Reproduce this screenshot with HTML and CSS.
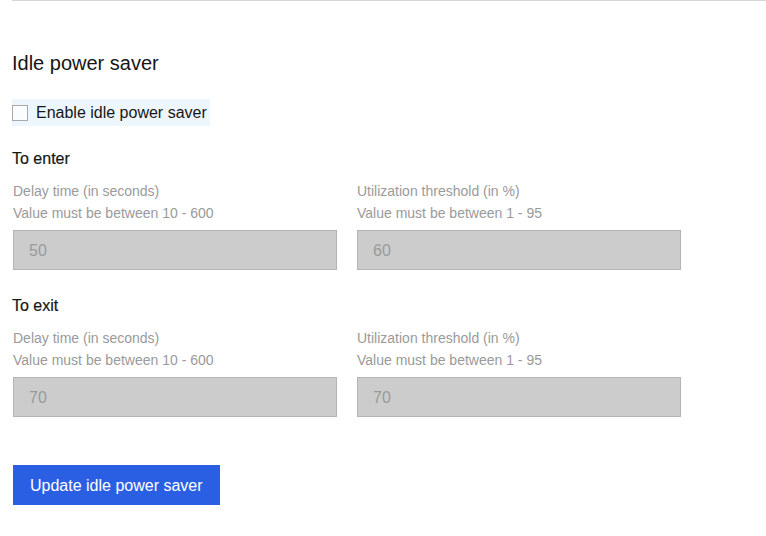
FILE: index.html
```html
<!DOCTYPE html>
<html lang="en">
<head>
  <meta charset="UTF-8">
  <meta name="viewport" content="width=device-width, initial-scale=1">
  <title>Idle power saver</title>
  <link rel="stylesheet" href="styles.css">
</head>
<body>
  <div class="page">
    <div class="rule"></div>

    <h2 class="title">Idle power saver</h2>

    <label class="toggle">
      <input type="checkbox" class="toggle-input">
      <span class="toggle-box"></span>
      <span class="toggle-text">Enable idle power saver</span>
    </label>

    <!-- Eintritt -->
    <h3 class="section-title">To enter</h3>
    <div class="fields">
      <div class="field">
        <span class="field-label">Delay time (in seconds)</span>
        <span class="field-hint">Value must be between 10 - 600</span>
        <input class="field-input" type="text" value="50" disabled>
      </div>
      <div class="field">
        <span class="field-label">Utilization threshold (in %)</span>
        <span class="field-hint">Value must be between 1 - 95</span>
        <input class="field-input" type="text" value="60" disabled>
      </div>
    </div>

    <!-- Austritt -->
    <h3 class="section-title exit">To exit</h3>
    <div class="fields">
      <div class="field">
        <span class="field-label">Delay time (in seconds)</span>
        <span class="field-hint">Value must be between 10 - 600</span>
        <input class="field-input" type="text" value="70" disabled>
      </div>
      <div class="field">
        <span class="field-label">Utilization threshold (in %)</span>
        <span class="field-hint">Value must be between 1 - 95</span>
        <input class="field-input" type="text" value="70" disabled>
      </div>
    </div>

    <button class="submit">Update idle power saver</button>
  </div>
</body>
</html>
```

FILE: styles.css
```css
:root {
  --text: #161616;
  --muted: #9a9a9a;
  --field-bg: #cccccc;
  --field-border: #b4b4b4;
  --accent: #2b5fe3;
  --highlight: #eef6fd;
}

* {
  margin: 0;
  padding: 0;
  box-sizing: border-box;
}

body {
  font-family: 'Liberation Sans', Arial, sans-serif;
  color: var(--text);
  background: #fff;
}

.page {
  padding-left: 12px;
}

.rule {
  border-top: 1px solid #d6d6d6;
}

.title {
  font-size: 20px;
  font-weight: 400;
  line-height: 24px;
  margin-top: 50px;
}

.toggle {
  display: inline-flex;
  align-items: center;
  gap: 8px;
  height: 27px;
  padding-right: 3px;
  margin-top: 24px;
  background-color: var(--highlight);
  cursor: pointer;
}

.toggle-input {
  display: none;
}

.toggle-box {
  width: 16px;
  height: 16px;
  border: 1px solid #a9a9a9;
  background: #fafcfe;
}

.toggle-text {
  font-size: 16px;
}

.section-title {
  font-size: 16px;
  font-weight: 400;
  line-height: 20px;
  margin-top: 23px;
  -webkit-text-stroke: 0.2px currentColor;
}

.section-title.exit {
  margin-top: 26px;
}

.fields {
  display: grid;
  grid-template-columns: 324px 324px;
  gap: 20px;
  margin-top: 11px;
  padding-left: 1px;
}

.field {
  display: flex;
  flex-direction: column;
}

.field-label,
.field-hint {
  font-size: 14px;
  line-height: 22px;
  color: var(--muted);
}

.field-input {
  margin-top: 6px;
  height: 40px;
  padding: 1px 15px 0;
  font-family: inherit;
  font-size: 16px;
  color: var(--muted);
  background-color: var(--field-bg);
  border: 1px solid var(--field-border);
  border-radius: 0;
  -webkit-text-fill-color: var(--muted);
  opacity: 1;
}

.submit {
  display: block;
  margin: 48px 0 0 1px;
  height: 40px;
  padding: 1px 17px 0;
  font-family: inherit;
  font-size: 16px;
  color: #fff;
  background-color: var(--accent);
  border: none;
  cursor: pointer;
}
```
